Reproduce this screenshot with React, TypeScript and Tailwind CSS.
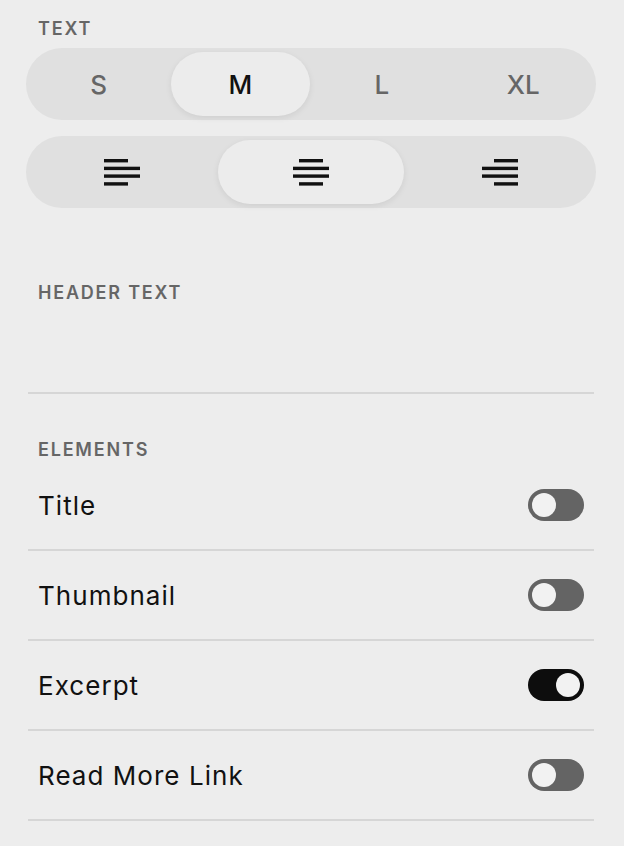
import { useState } from 'react';

const sizes = ['S', 'M', 'L', 'XL'];
const aligns = ['left', 'center', 'right'] as const;

function AlignIcon({ kind }: { kind: 'left' | 'center' | 'right' }) {
  // short lines are 24 wide inside a 36 wide box
  const sx = kind === 'left' ? 0 : kind === 'center' ? 6 : 12;
  return (
    <svg width="36" height="27" viewBox="0 0 36 27" fill="#111">
      <rect x={sx} y="0" width="24" height="3.4" />
      <rect x="0" y="7.7" width="36" height="3.4" />
      <rect x="0" y="15.4" width="36" height="3.4" />
      <rect x={sx} y="23.2" width="24" height="3.4" />
    </svg>
  );
}

function Toggle({ on, onClick }: { on: boolean; onClick: () => void }) {
  return (
    <button
      onClick={onClick}
      className={`w-[56px] h-[32px] rounded-full p-[4px] flex items-center ${on ? 'bg-[#0d0d0d] justify-end' : 'bg-[#646464] justify-start'}`}
    >
      <span className="block w-[24px] h-[24px] rounded-full bg-[#f2f2f2]" />
    </button>
  );
}

export default function App() {
  const [size, setSize] = useState('M');
  const [align, setAlign] = useState<'left' | 'center' | 'right'>('center');
  const [elements, setElements] = useState<Record<string, boolean>>({
    Title: false,
    Thumbnail: false,
    Excerpt: true,
    'Read More Link': false,
  });

  return (
    <div className="min-h-screen bg-[#ededed] font-['Inter',sans-serif] pl-[26px] pr-[28px] pt-[18px]">
      <p className="pl-[12px] text-[18px] leading-[22px] font-semibold tracking-[0.1em] text-[#666]">TEXT</p>

      {/* size picker */}
      <div className="mt-[8px] h-[72px] rounded-full bg-[#e0e0e0] px-[2px] py-[4px] grid grid-cols-4">
        {sizes.map(s => (
          <button
            key={s}
            onClick={() => setSize(s)}
            className={`mx-[1px] rounded-full flex items-center justify-center text-[26px] font-medium ${size === s ? 'bg-[#ececec] text-[#111] shadow-[0_2px_6px_rgba(0,0,0,0.08)]' : 'text-[#666]'}`}
          >
            {s}
          </button>
        ))}
      </div>

      {/* alignment picker */}
      <div className="mt-[16px] h-[72px] rounded-full bg-[#e0e0e0] px-[2px] py-[4px] grid grid-cols-3">
        {aligns.map(a => (
          <button
            key={a}
            onClick={() => setAlign(a)}
            className={`mx-[1px] rounded-full flex items-center justify-center ${align === a ? 'bg-[#ececec] shadow-[0_2px_6px_rgba(0,0,0,0.08)]' : ''}`}
          >
            <AlignIcon kind={a} />
          </button>
        ))}
      </div>

      <p className="mt-[74px] pl-[12px] text-[18px] leading-[22px] font-semibold tracking-[0.1em] text-[#666]">HEADER TEXT</p>

      <div className="mt-[88px] mx-[2px] border-t-2 border-[#d6d6d6]" />

      <p className="mt-[45px] pl-[12px] text-[18px] leading-[22px] font-semibold tracking-[0.1em] text-[#666]">ELEMENTS</p>

      <div className="mx-[2px]">
        {Object.keys(elements).map(name => (
          <div key={name} className="h-[90px] flex items-center justify-between pl-[10px] pr-[10px] border-b-2 border-[#d6d6d6]">
            <span className="text-[26px] tracking-[0.04em] text-[#111]">{name}</span>
            <Toggle on={elements[name]} onClick={() => setElements({ ...elements, [name]: !elements[name] })} />
          </div>
        ))}
      </div>
    </div>
  );
}
